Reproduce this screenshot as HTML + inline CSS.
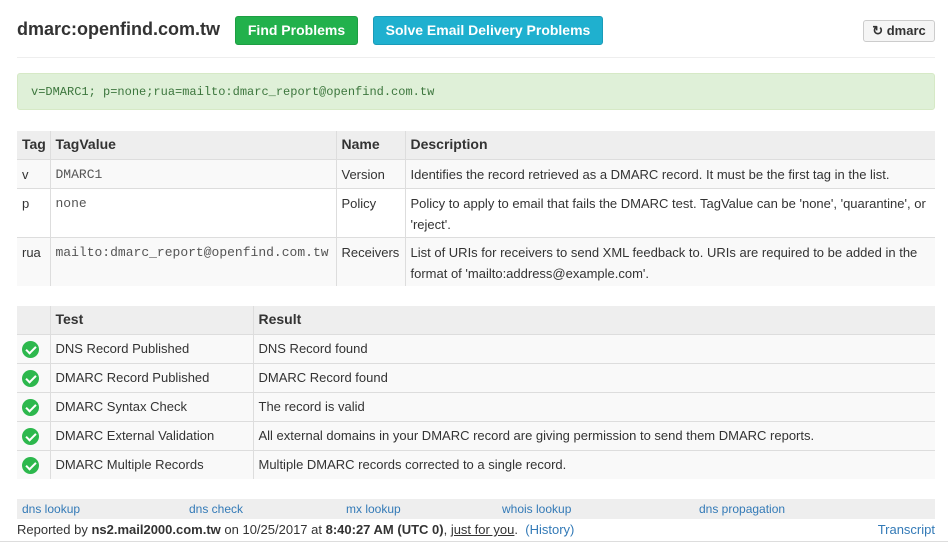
<!DOCTYPE html>
<html><head><style>
*{box-sizing:border-box;margin:0;padding:0}
body{width:948px;height:548px;background:#fff;font-family:"Liberation Sans",Arial,sans-serif;font-size:13px;color:#333;position:relative;overflow:hidden}
.a{position:absolute}
h1{position:absolute;left:17px;top:19px;font-size:18px;font-weight:bold;color:#333}
.btn{position:absolute;top:16px;height:29px;border-radius:3px;color:#fff;font-weight:bold;font-size:14px;line-height:27px;text-align:center}
table{position:absolute;left:17px;width:918px;border-collapse:collapse;table-layout:fixed}
td,th{border-left:1px solid #ddd;border-top:1px solid #ddd;text-align:left;vertical-align:top;padding:0 5px;font-size:13px}
tr>*:first-child{border-left:none}
th{background:#eee;font-weight:bold;height:28px;line-height:27px;border-top:none;font-size:14px}
td{background:#f9f9f9;line-height:21px;padding-top:4px}
tr.w td{background:#fff}
.m{font-family:"Liberation Mono",monospace;font-size:13px;color:#555}
.t2 td{height:29px;padding-top:0;line-height:28px}
.ck{display:inline-block;width:17px;height:17px;border-radius:50%;background:#2db84d;margin-top:6px;position:relative;vertical-align:top}
.ck:after{content:"";position:absolute;left:6px;top:3px;width:4px;height:8px;border:solid #fff;border-width:0 2.5px 2.5px 0;transform:rotate(45deg)}
a{color:#337ab7;text-decoration:none}
</style></head><body>
<h1>dmarc:openfind.com.tw</h1>
<div class="btn" style="left:235px;width:123px;background:#22b14c;border:1px solid #1e9e43">Find Problems</div>
<div class="btn" style="left:373px;width:230px;background:#1fb0cf;border:1px solid #1a9bb8">Solve Email Delivery Problems</div>
<div class="a" style="left:863px;top:20px;width:72px;height:22px;border:1px solid #ccc;border-radius:3px;background:#f5f5f5;font-size:13px;font-weight:bold;line-height:20px;text-align:center;color:#333">&#x21bb; dmarc</div>
<div class="a" style="left:17px;top:57px;width:918px;border-top:1px solid #eee"></div>
<div class="a m" style="left:17px;top:73px;width:918px;height:37px;background:#dff0d8;border:1px solid #d6e9c6;border-radius:3px;color:#3c763d;padding-left:13px;line-height:36px;font-size:12px">v=DMARC1; p=none;rua=mailto:dmarc_report@openfind.com.tw</div>
<table style="top:131px">
<colgroup><col style="width:33px"><col style="width:286px"><col style="width:69px"><col></colgroup>
<tr><th>Tag</th><th>TagValue</th><th>Name</th><th>Description</th></tr>
<tr style="height:29px"><td>v</td><td class="m">DMARC1</td><td>Version</td><td>Identifies the record retrieved as a DMARC record. It must be the first tag in the list.</td></tr>
<tr class="w" style="height:49px"><td>p</td><td class="m">none</td><td>Policy</td><td>Policy to apply to email that fails the DMARC test. TagValue can be 'none', 'quarantine', or 'reject'.</td></tr>
<tr style="height:49px"><td>rua</td><td class="m">mailto:dmarc_report@openfind.com.tw</td><td>Receivers</td><td>List of URIs for receivers to send XML feedback to. URIs are required to be added in the format of 'mailto:address@example.com'.</td></tr>
</table>
<table class="t2" style="top:306px">
<colgroup><col style="width:33px"><col style="width:203px"><col></colgroup>
<tr><th></th><th>Test</th><th>Result</th></tr>
<tr><td><span class="ck"></span></td><td>DNS Record Published</td><td>DNS Record found</td></tr>
<tr><td><span class="ck"></span></td><td>DMARC Record Published</td><td>DMARC Record found</td></tr>
<tr><td><span class="ck"></span></td><td>DMARC Syntax Check</td><td>The record is valid</td></tr>
<tr><td><span class="ck"></span></td><td>DMARC External Validation</td><td>All external domains in your DMARC record are giving permission to send them DMARC reports.</td></tr>
<tr><td><span class="ck"></span></td><td>DMARC Multiple Records</td><td>Multiple DMARC records corrected to a single record.</td></tr>
</table>
<div class="a" style="left:17px;top:499px;width:918px;height:20px;background:#eee;font-size:12px;line-height:20px">
<a class="a" style="left:5px">dns lookup</a><a class="a" style="left:172px">dns check</a><a class="a" style="left:329px">mx lookup</a><a class="a" style="left:485px">whois lookup</a><a class="a" style="left:682px">dns propagation</a></div>
<div class="a" style="left:17px;top:522px;width:918px;font-size:13px;line-height:16px">Reported by <b>ns2.mail2000.com.tw</b> on 10/25/2017 at <b>8:40:27 AM (UTC 0)</b>, <span style="text-decoration:underline">just for you</span>. &nbsp;<a>(History)</a><a style="position:absolute;right:0">Transcript</a></div>
<div class="a" style="left:0;top:541px;width:948px;border-top:1px solid #ddd"></div>
</body></html>
